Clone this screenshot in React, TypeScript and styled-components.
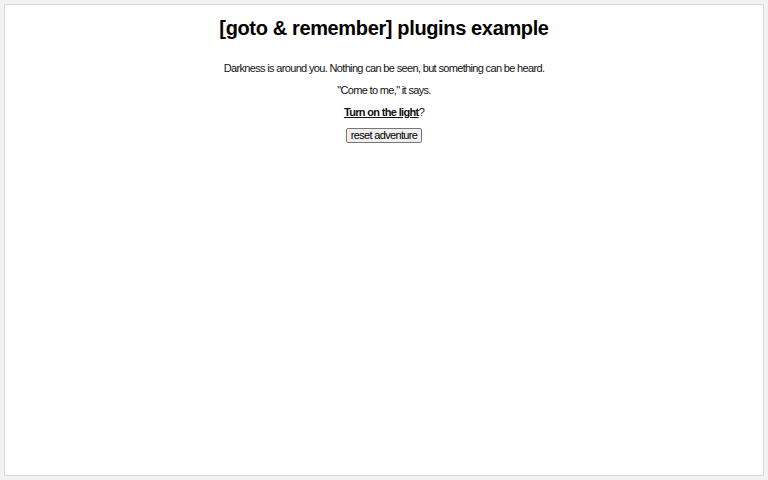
import React, {useState} from 'react';
import styled, {createGlobalStyle} from 'styled-components';

const GlobalStyle = createGlobalStyle`
html, body {
    margin: 0;
    padding: 0;
    background: #f2f2f2;
}
#root {
    padding: 4px;
    box-sizing: border-box;
    height: 480px;
}
`

const Panel = styled.div`
box-sizing: border-box;
height: 100%;
background: #ffffff;
border: 1px solid #dcdcdc;
display: flex;
flex-direction: column;
align-items: center;
font-family: "Liberation Sans", Arial, sans-serif;
color: #111;
`

const Title = styled.h1`
margin: 12px 0 0;
font-size: 20px;
line-height: 23px;
font-weight: bold;
letter-spacing: -0.36px;
color: #000;
`

const Story = styled.div`
margin-top: 22px;
display: flex;
flex-direction: column;
align-items: center;
gap: 9px;
letter-spacing: -0.66px;
`

const Line = styled.p`
margin: 0;
font-size: 11px;
line-height: 13px;
`

const Choice = styled.a`
font-weight: bold;
color: #111;
text-decoration: underline;
cursor: pointer;
`

const ResetButton = styled.button`
font-family: "Liberation Sans", Arial, sans-serif;
font-size: 11px;
line-height: 11px;
letter-spacing: -0.66px;
padding: 1px 4px;
background: #efefef;
color: #000;
border: 1px solid #767676;
border-radius: 2px;
cursor: pointer;
`

const App: React.FC = () => {
    const [lit, setLit] = useState<boolean>(false)

    return (
        <>
            <GlobalStyle/>
            <Panel>
                <Title>[goto &amp; remember] plugins example</Title>
                <Story>
                    {lit ? (
                        <Line>The light is on. There is nothing here.</Line>
                    ) : (
                        <>
                            <Line>Darkness is around you. Nothing can be seen, but something can be heard.</Line>
                            <Line>"Come to me," it says.</Line>
                            <Line><Choice onClick={() => setLit(true)}>Turn on the light</Choice>?</Line>
                        </>
                    )}
                    <ResetButton onClick={() => setLit(false)}>reset adventure</ResetButton>
                </Story>
            </Panel>
        </>
    )
};

export default App;
